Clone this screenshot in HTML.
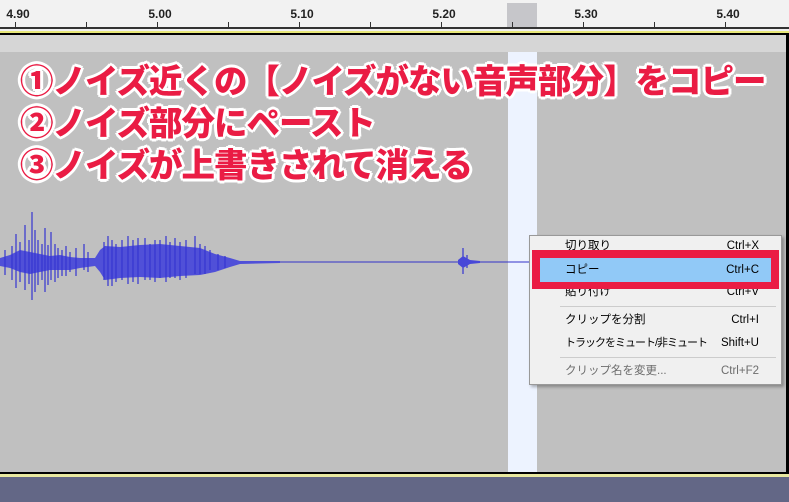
<!DOCTYPE html><html><head><meta charset="utf-8"><style>
body{margin:0;width:789px;height:502px;overflow:hidden;background:#c0c0c0;position:relative;font-family:"Liberation Sans","Noto Sans CJK JP",sans-serif}
.a{position:absolute}
.lbl{position:absolute;top:7px;font-size:12px;font-weight:bold;color:#222;transform:translateX(-50%)}
.tk{position:absolute;top:22px;width:1px;height:6px;background:#333}
.t{position:absolute;left:20px;font-size:33.5px;line-height:40px;font-weight:900;color:#ea1c44;white-space:nowrap;letter-spacing:-1px;
text-shadow:2px 0 #fff,-2px 0 #fff,0 2px #fff,0 -2px #fff,2px 2px #fff,-2px -2px #fff,2px -2px #fff,-2px 2px #fff,3px 0 #fff,-3px 0 #fff,0 3px #fff,0 -3px #fff}
.mi{position:absolute;left:565px;width:194px;font-size:11.5px;color:#000;display:flex;justify-content:space-between;height:16px;line-height:16px;white-space:nowrap}
</style></head><body>
<div class="a" style="left:0;top:0;width:789px;height:28px;background:#f2f2f2"></div>
<div class="a" style="left:507px;top:3px;width:30px;height:25px;background:#c6c6ca"></div>
<div class="a" style="left:0;top:27px;width:789px;height:2px;background:#333"></div>
<span class="lbl" style="left:18px">4.90</span><span class="lbl" style="left:160px">5.00</span><span class="lbl" style="left:302px">5.10</span><span class="lbl" style="left:444px">5.20</span><span class="lbl" style="left:586px">5.30</span><span class="lbl" style="left:728px">5.40</span>
<div class="tk" style="left:15px"></div><div class="tk" style="left:86px"></div><div class="tk" style="left:157px"></div><div class="tk" style="left:228px"></div><div class="tk" style="left:299px"></div><div class="tk" style="left:370px"></div><div class="tk" style="left:441px"></div><div class="tk" style="left:512px"></div><div class="tk" style="left:583px"></div><div class="tk" style="left:654px"></div><div class="tk" style="left:725px"></div>
<div class="a" style="left:0;top:29px;width:789px;height:3px;background:#f0f0f0"></div>
<div class="a" style="left:0;top:31px;width:789px;height:2px;background:#e8e87a"></div>
<div class="a" style="left:0;top:33px;width:789px;height:2px;background:#000"></div>
<div class="a" style="left:0;top:35px;width:786px;height:17px;background:#d6d6d6"></div>
<div class="a" style="left:786px;top:33px;width:3px;height:441px;background:#000"></div>
<div class="a" style="left:508px;top:52px;width:29px;height:420px;background:#edf3ff"></div>
<div class="a" style="left:0;top:472px;width:789px;height:2px;background:#000"></div>
<div class="a" style="left:0;top:474px;width:789px;height:3px;background:#e8e8a0"></div>
<div class="a" style="left:0;top:477px;width:789px;height:25px;background:#636786"></div>
<svg class="a" style="left:0;top:200px" width="789" height="110">
<line x1="0" y1="62" x2="530" y2="62" stroke="#3232c8" stroke-width="1"/>
<polygon fill="#5050d8" points="0,58 10,55 20,50 30,52 40,54 50,56 60,55 70,57 80,58 95,58 100,50 105,46 120,47 140,45 160,44 180,46 200,48 215,54 230,58 240,61 280,61 280,63 240,64 230,67 215,72 200,75 180,76 160,78 140,77 120,78 105,80 100,72 95,66 80,68 70,70 60,70 50,70 40,72 30,74 20,72 10,68 0,66"/>
<path stroke="#3535d0" stroke-width="1.2" fill="none" d="M5,50V75M12,46V80M16,34V88M20,42V82M25,25V90M29,40V84M32,12V100M35,30V92M38,40V85M42,44V80M45,28V92M48,45V85M51,32V80M55,44V82M58,48V78M62,50V76M66,46V76M70,52V72M76,48V76M84,44V70M88,52V72M104,42V80M108,36V86M112,40V86M116,44V82M122,40V80M128,36V84M133,40V82M138,38V84M145,38V80M150,44V80M155,40V82M160,40V78M166,36V82M170,42V78M175,38V78M180,42V80M186,40V78M195,36V74M200,44V74M205,46V74M210,50V70M218,54V70M225,56V68M463,48V74M467,55V68"/>
<polygon fill="#4848d8" points="458,60 463,56 470,60 480,61 480,63 470,64 463,68 458,64"/>
</svg>
<div class="t" style="top:63px">①ノイズ近くの【ノイズがない音声部分】をコピー</div>
<div class="t" style="top:105px">②ノイズ部分にペースト</div>
<div class="t" style="top:147px">③ノイズが上書きされて消える</div>
<div class="a" style="left:529px;top:235px;width:251px;height:148px;background:#f0f0f0;border:1px solid #999;box-shadow:2px 2px 3px rgba(0,0,0,.3)"></div>
<div class="a" style="left:532px;top:250px;width:247px;height:39px;background:#ea1c44"></div>
<div class="a" style="left:540px;top:258px;width:231px;height:24px;background:#91c9f7"></div>
<div class="mi" style="top:238px;height:12px;overflow:hidden"><span>切り取り</span><span>Ctrl+X</span></div>
<div class="mi" style="top:262px"><span>コピー</span><span>Ctrl+C</span></div>
<div class="mi" style="top:289px;height:9px;overflow:hidden;line-height:6px"><span>貼り付け</span><span>Ctrl+V</span></div>
<div class="a" style="left:560px;top:306px;width:216px;height:1px;background:#ccc"></div>
<div class="mi" style="top:312px"><span>クリップを分割</span><span>Ctrl+I</span></div>
<div class="mi" style="top:335px"><span style="letter-spacing:-1px;font-size:11px">トラックをミュート/非ミュート</span><span>Shift+U</span></div>
<div class="a" style="left:560px;top:357px;width:216px;height:1px;background:#ccc"></div>
<div class="mi" style="top:363px;color:#6d6d6d"><span>クリップ名を変更...</span><span>Ctrl+F2</span></div>
</body></html>
